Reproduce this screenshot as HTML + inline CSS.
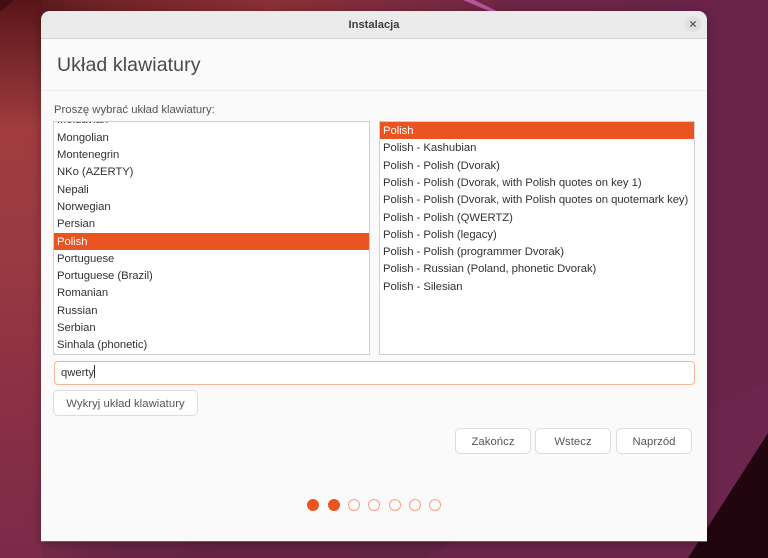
<!DOCTYPE html>
<html lang="pl"><head><meta charset="utf-8"><title>Instalacja</title>
<style>
html,body{margin:0;padding:0;width:768px;height:558px;overflow:hidden}
body{position:relative;font-family:"Liberation Sans",sans-serif;font-size:11.3px;letter-spacing:-.05px;color:#3d3d3d;background:#6a2449}
.abs{position:absolute}
.win{position:absolute;left:41px;top:11px;width:666px;height:530px;background:#fafafa;border-radius:9px 9px 0 0;box-shadow:0 2px 10px rgba(0,0,0,.3),0 1px 0 #777;overflow:hidden}
.tb{position:absolute;left:0;top:0;width:666px;height:27px;background:#ebebeb;border-bottom:1px solid #d2d2d2;text-align:center;line-height:28px;font-weight:bold;font-size:11.2px;letter-spacing:0;color:#3d3d3d}
.close{position:absolute;left:644px;top:5px;width:16px;height:16px;border-radius:50%;background:#e0e0e0}
.h{position:absolute;left:16px;top:41px;font-size:19.5px;line-height:26px;color:#4a4a4a;letter-spacing:.1px}
.sep{position:absolute;left:0;top:79px;width:666px;height:1px;background:#ececec}
.lab{position:absolute;left:13px;top:92px;line-height:14px;color:#555;font-size:11.3px;letter-spacing:0}
.list{position:absolute;top:110px;height:232px;background:#fff;border:1px solid #cfcfcf;overflow:hidden}
.row{position:absolute;left:0;right:0;height:17.3px;line-height:18.3px;padding-left:3px;white-space:nowrap;color:#333}
.sel{background:#e95420;color:#fff}
.entry{position:absolute;left:13px;top:350px;width:633px;height:22px;background:#fff;border:1px solid #f6b29b;border-radius:4px;line-height:23px;padding-left:6px;color:#333}
.btn{position:absolute;box-sizing:border-box;height:26px;background:#fff;border:1px solid #dcdcdc;border-radius:5px;text-align:center;line-height:26px;color:#555;font-size:11.3px;letter-spacing:.05px}
.dot{position:absolute;top:488px;box-sizing:border-box;width:12px;height:12px;border-radius:50%;border:1.2px solid #f4a284;background:#fafafa}
.dot.on{background:#e95420;border-color:#e95420}
</style></head><body>
<svg class="abs" style="left:0;top:0" width="768" height="558" viewBox="0 0 768 558">
<defs>
<linearGradient id="a" x1="0" y1="0" x2="0" y2="1"><stop offset="0" stop-color="#5a1518"/><stop offset=".07" stop-color="#6e2226"/><stop offset=".23" stop-color="#a03c3f"/><stop offset=".45" stop-color="#9a3a42"/><stop offset=".72" stop-color="#8a3045"/><stop offset="1" stop-color="#7c2a4a"/></linearGradient>
<linearGradient id="b" x1="0" y1="0" x2="768" y2="0" gradientUnits="userSpaceOnUse"><stop offset="0" stop-color="#4f1416"/><stop offset=".13" stop-color="#702327"/><stop offset=".35" stop-color="#8a3034"/><stop offset=".52" stop-color="#7c2a40"/><stop offset=".68" stop-color="#6c2546"/><stop offset="1" stop-color="#6a2449"/></linearGradient>
<linearGradient id="c" x1="0" y1="0" x2="768" y2="0" gradientUnits="userSpaceOnUse"><stop offset="0" stop-color="#7e2c48"/><stop offset=".13" stop-color="#6a2545"/><stop offset=".3" stop-color="#642344"/><stop offset="1" stop-color="#622245"/></linearGradient>
</defs>
<rect x="0" y="0" width="768" height="12" fill="url(#b)"/>
<rect x="0" y="0" width="42" height="558" fill="url(#a)"/>
<polygon points="0,0 14,0 0,12" fill="#3a0a10" opacity=".7"/>
<rect x="42" y="541" width="726" height="17" fill="url(#c)"/>
<rect x="0" y="541" width="42" height="17" fill="#7c2a4a"/>
<polygon points="426,558 456,541 768,541 768,558" fill="#6a2449"/>
<polygon points="707,410 768,380 768,558 707,558" fill="#6c254c"/>
<polygon points="768,433 768,558 688,558" fill="#22060f"/>
<path d="M463 0 L474 0 L497 11 L489 11 Z" fill="#b9569a"/>
</svg>
<div class="win">
<div class="tb">Instalacja</div>
<div class="close"><svg width="16" height="16" viewBox="0 0 16 16"><path d="M5.3 5.3L10.7 10.7M10.7 5.3L5.3 10.7" stroke="#555" stroke-width="1.3"/></svg></div>
<div class="h">Układ klawiatury</div>
<div class="sep"></div>
<div class="lab">Proszę wybrać układ klawiatury:</div>
<div class="list" style="left:12px;width:315px">
<div class="row" style="top:-10.6px">Moldavian</div>
<div class="row" style="top:6.7px">Mongolian</div>
<div class="row" style="top:24px">Montenegrin</div>
<div class="row" style="top:41.3px">NKo (AZERTY)</div>
<div class="row" style="top:58.6px">Nepali</div>
<div class="row" style="top:75.9px">Norwegian</div>
<div class="row" style="top:93.2px">Persian</div>
<div class="row sel" style="top:110.5px">Polish</div>
<div class="row" style="top:127.8px">Portuguese</div>
<div class="row" style="top:145.1px">Portuguese (Brazil)</div>
<div class="row" style="top:162.4px">Romanian</div>
<div class="row" style="top:179.7px">Russian</div>
<div class="row" style="top:197px">Serbian</div>
<div class="row" style="top:214.3px">Sinhala (phonetic)</div>
</div>
<div class="list" style="left:338px;width:314px">
<div class="row sel" style="top:0">Polish</div>
<div class="row" style="top:17.3px">Polish - Kashubian</div>
<div class="row" style="top:34.6px">Polish - Polish (Dvorak)</div>
<div class="row" style="top:51.9px">Polish - Polish (Dvorak, with Polish quotes on key 1)</div>
<div class="row" style="top:69.2px">Polish - Polish (Dvorak, with Polish quotes on quotemark key)</div>
<div class="row" style="top:86.5px">Polish - Polish (QWERTZ)</div>
<div class="row" style="top:103.8px">Polish - Polish (legacy)</div>
<div class="row" style="top:121.1px">Polish - Polish (programmer Dvorak)</div>
<div class="row" style="top:138.4px">Polish - Russian (Poland, phonetic Dvorak)</div>
<div class="row" style="top:155.7px">Polish - Silesian</div>
</div>
<div class="entry">qwerty<span style="display:inline-block;width:1px;height:13px;background:#333;vertical-align:-2px"></span></div>
<div class="btn" style="left:12px;top:379px;width:145px">Wykryj układ klawiatury</div>
<div class="btn" style="left:414px;top:417px;width:76px">Zakończ</div>
<div class="btn" style="left:494px;top:417px;width:76px">Wstecz</div>
<div class="btn" style="left:575px;top:417px;width:76px">Naprzód</div>
<div class="dot on" style="left:266px"></div>
<div class="dot on" style="left:286.5px"></div>
<div class="dot" style="left:307px"></div>
<div class="dot" style="left:327px"></div>
<div class="dot" style="left:347.5px"></div>
<div class="dot" style="left:368px"></div>
<div class="dot" style="left:388px"></div>
</div>
</body></html>
